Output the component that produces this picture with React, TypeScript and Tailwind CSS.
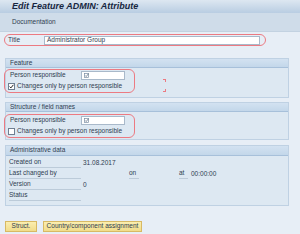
import React from 'react';

const font = { fontFamily: '"Liberation Sans", Arial, sans-serif' };

function TinyCheck() {
  return (
    <svg width="5" height="5" viewBox="0 0 5 5" className="shrink-0">
      <rect x="0.5" y="0.5" width="4" height="4" fill="none" stroke="#7a8da3" strokeWidth="0.7" />
      <path d="M1.2 2.5 L2.2 3.5 L4.6 0.6" fill="none" stroke="#4a5d73" strokeWidth="0.7" />
    </svg>
  );
}

function Checkbox({ checked }: { checked?: boolean }) {
  return (
    <svg width="7" height="7" viewBox="0 0 7 7" className="shrink-0">
      <rect x="0.5" y="0.5" width="6" height="6" fill="#fff" stroke="#6f7f91" strokeWidth="1" />
      {checked && <path d="M1.6 3.6 L2.9 4.9 L5.4 1.8" fill="none" stroke="#222" strokeWidth="1" />}
    </svg>
  );
}

function Panel({ title, headerH, children }: { title: string; headerH: string; children: React.ReactNode }) {
  return (
    <div className="ml-[5px] w-[284px] border border-[#bfd1e3] bg-[#dde8f2]">
      <div className={`${headerH} pl-[4px] flex items-center bg-gradient-to-b from-[#d3e2f1] to-[#c3d7ea] border-b border-[#a7c0da] text-[6.5px] text-[#2f3d50] leading-none`}>
        {title}
      </div>
      {children}
    </div>
  );
}

function ResponsibleBlock({ checked }: { checked?: boolean }) {
  return (
    <div className="ml-[-2px] w-[131px] h-[24px] border border-[#ec7a82] rounded-[6px]">
      <div className="flex items-center h-[10px] pl-[5px]">
        <span className="w-[71px] text-[6.5px] text-[#2f3d50] leading-none">Person responsible</span>
        <div className="w-[44px] h-[9px] bg-white border border-[#a9b9ca] flex items-center pl-[2px]">
          <TinyCheck />
        </div>
      </div>
      <div className="flex items-center gap-[2px] h-[10px] pl-[3px] mt-[1px]">
        <Checkbox checked={checked} />
        <span className="text-[6.5px] text-[#2f3d50] leading-none">Changes only by person responsible</span>
      </div>
    </div>
  );
}

function AdminRow({ label, value, extra }: { label: string; value?: string; extra?: boolean }) {
  return (
    <div className="flex items-end h-[11px] pl-[3px] text-[6.5px] text-[#2f3d50] leading-none">
      <span className="w-[72px] border-b border-[#bccbd9] pb-[2px]">{label}</span>
      <span className="w-[48px] pl-[2px] pb-[2px]">{value}</span>
      {extra && (
        <>
          <span className="w-[10px] border-b border-[#bccbd9] pb-[2px]">on</span>
          <span className="w-[40px]" />
          <span className="w-[9px] border-b border-[#bccbd9] pb-[2px]">at</span>
          <span className="pl-[3px] pb-[2px]">00:00:00</span>
        </>
      )}
    </div>
  );
}

export default function App() {
  return (
    <div style={font} className="w-[300px] h-[234px] overflow-hidden bg-[#e7eef6] flex flex-col [&>*]:shrink-0">
      {/* Title bar */}
      <div className="h-[13px] pl-[12px] flex items-center bg-gradient-to-b from-[#dde7f1] to-[#b9cde2]">
        <span className="text-[9px] font-bold italic text-[#172640] leading-none">Edit Feature ADMIN: Attribute</span>
      </div>
      {/* Menu bar */}
      <div className="h-[19px] pl-[12px] flex items-center bg-[#cfdce9] border-b border-[#c3d2e1]">
        <span className="text-[6.5px] text-[#2f3d50] leading-none">Documentation</span>
      </div>

      {/* Title row */}
      <div className="mt-[2px] ml-[4px] w-[262px] h-[12px] border border-[#ec7a82] rounded-[6px] flex items-center pl-[3px]">
        <span className="w-[36px] text-[6.5px] text-[#2f3d50] leading-none">Title</span>
        <div className="flex-1 mr-[5px] h-[9px] bg-white border border-[#a9b9ca] flex items-center pl-[2px] text-[6.5px] text-[#2f3d50] leading-none">
          Administrator Group
        </div>
      </div>

      <div className="mt-[12px]">
        <Panel title="Feature" headerH="h-[9px]">
          <div className="flex items-start pt-[1px] pb-[4px]">
            <ResponsibleBlock checked />
            <div className="ml-[28px] mt-[10px] flex flex-col justify-between h-[13px] w-[3px]">
              <span className="h-[3px] border-t border-r border-[#ec7a82]" />
              <span className="h-[3px] border-b border-r border-[#ec7a82]" />
            </div>
          </div>
        </Panel>
      </div>

      <div className="mt-[4px]">
        <Panel title="Structure / field names" headerH="h-[9px]">
          <div className="pt-[2px] pb-[1px]">
            <ResponsibleBlock />
          </div>
        </Panel>
      </div>

      <div className="mt-[5px]">
        <Panel title="Administrative data" headerH="h-[10px]">
          <div className="pt-[1px] pb-[4px]">
            <AdminRow label="Created on" value="31.08.2017" />
            <AdminRow label="Last changed by" extra />
            <AdminRow label="Version" value="0" />
            <AdminRow label="Status" />
          </div>
        </Panel>
      </div>

      <div className="mt-[15px] ml-[5px] flex gap-[6px]">
        <button className="w-[32px] h-[11px] flex items-center justify-center bg-gradient-to-b from-[#fbeeb0] to-[#f1dc8a] border border-[#d8b964] text-[6.5px] text-[#2f3d50] leading-none">
          Struct.
        </button>
        <button className="w-[99px] h-[11px] flex items-center justify-center bg-gradient-to-b from-[#fbeeb0] to-[#f1dc8a] border border-[#d8b964] text-[6.5px] text-[#2f3d50] leading-none">
          Country/component assignment
        </button>
      </div>
    </div>
  );
}
